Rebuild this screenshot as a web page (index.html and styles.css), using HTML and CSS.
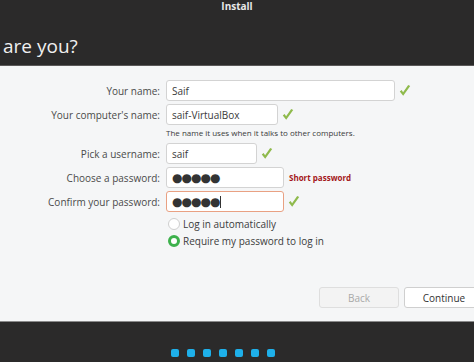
FILE: index.html
```html
<!DOCTYPE html>
<html lang="en">
<head>
    <meta charset="UTF-8">
    <title>Install</title>
    <link rel="stylesheet" href="styles.css">
</head>
<body>
    <div class="window">
        <!-- Pasek tytułu -->
        <header class="titlebar">
            <div class="app-title">Install</div>
            <h1 class="page-title">are you?</h1>
        </header>

        <!-- Formularz użytkownika -->
        <main class="panel">
            <div class="form">
                <div class="row">
                    <label class="label">Your name:</label>
                    <div class="field wide">Saif</div>
                    <svg class="check" viewBox="0 0 12 13"><path d="M0.8 7.4 L4.2 11.8 L11.2 2 L9.2 0.9 L4.1 8.2 L2.6 6.1 Z" fill="#8fba4c"/></svg>
                </div>
                <div class="row">
                    <label class="label">Your computer's name:</label>
                    <div class="field medium">saif-VirtualBox</div>
                    <svg class="check" viewBox="0 0 12 13"><path d="M0.8 7.4 L4.2 11.8 L11.2 2 L9.2 0.9 L4.1 8.2 L2.6 6.1 Z" fill="#8fba4c"/></svg>
                </div>
                <div class="hint">The name it uses when it talks to other computers.</div>
                <div class="row">
                    <label class="label">Pick a username:</label>
                    <div class="field small">saif</div>
                    <svg class="check" viewBox="0 0 12 13"><path d="M0.8 7.4 L4.2 11.8 L11.2 2 L9.2 0.9 L4.1 8.2 L2.6 6.1 Z" fill="#8fba4c"/></svg>
                </div>
                <div class="row">
                    <label class="label">Choose a password:</label>
                    <div class="field pass"><span class="dots">●●●●●</span></div>
                    <span class="warning">Short password</span>
                </div>
                <div class="row">
                    <label class="label">Confirm your password:</label>
                    <div class="field pass focused"><span class="dots">●●●●●</span><span class="caret"></span></div>
                    <svg class="check" viewBox="0 0 12 13"><path d="M0.8 7.4 L4.2 11.8 L11.2 2 L9.2 0.9 L4.1 8.2 L2.6 6.1 Z" fill="#8fba4c"/></svg>
                </div>
                <div class="options">
                    <div class="option"><span class="radio"></span>Log in automatically</div>
                    <div class="option"><span class="radio checked"></span>Require my password to log in</div>
                </div>
            </div>

            <div class="actions">
                <button class="btn disabled">Back</button>
                <button class="btn">Continue</button>
            </div>
        </main>

        <!-- Pasek postępu -->
        <footer class="progress">
            <span class="step"></span>
            <span class="step"></span>
            <span class="step"></span>
            <span class="step"></span>
            <span class="step"></span>
            <span class="step"></span>
            <span class="step"></span>
        </footer>
    </div>
</body>
</html>
```

FILE: styles.css
```css
/* Ustawienia ogólne */
html, body {
    margin: 0;
    padding: 0;
}

body {
    width: 474px;
    height: 362px;
    overflow: hidden;
    font-family: "Open Sans", "DejaVu Sans", sans-serif;
    background-color: #2b2a2a;
}

.window {
    display: flex;
    flex-direction: column;
    height: 362px;
}

/* Pasek tytułu */
.titlebar {
    height: 65px;
    background-color: #2b2a2a;
    border-bottom: 1px solid #5a5858;
    color: #f2f2f2;
}

.app-title {
    text-align: center;
    font-size: 10px;
    font-weight: bold;
    line-height: 13px;
    color: #e8e8e8;
}

.page-title {
    margin: 0;
    padding: 22px 0 0 3px;
    font-size: 19px;
    font-weight: normal;
    line-height: 22px;
    color: #f0f0f0;
}

/* Panel z formularzem */
.panel {
    height: 256px;
    background-color: #f5f6f7;
    border-bottom: 1px solid #8a8a8a;
    display: flex;
    flex-direction: column;
    box-sizing: border-box;
    padding-top: 14px;
}

.form {
    display: flex;
    flex-direction: column;
    font-size: 10px;
    color: #3c3c3c;
}

.row {
    display: flex;
    align-items: center;
    height: 21px;
    margin-bottom: 3px;
}

.label {
    width: 160px;
    padding-right: 6px;
    text-align: right;
    color: #4a4a4a;
}

.field {
    height: 21px;
    box-sizing: border-box;
    border: 1px solid #d3d3d3;
    border-radius: 3px;
    background-color: #fff;
    padding-left: 5px;
    display: flex;
    align-items: center;
    color: #3a3a3a;
}

.wide { width: 229px; }
.medium { width: 112px; }
.small { width: 91px; }
.pass { width: 118px; }

.focused {
    border-color: #e9a183;
}

.dots {
    font-size: 12px;
    letter-spacing: -1px;
    color: #333;
}

.caret {
    width: 1px;
    height: 12px;
    margin-left: 1px;
    background-color: #333;
}

.check {
    width: 12px;
    height: 13px;
    margin-left: 4px;
}

.warning {
    margin-left: 5px;
    font-size: 8px;
    font-weight: bold;
    color: #a4161a;
}

.hint {
    margin: -1px 0 5px 166px;
    font-size: 8px;
    line-height: 11px;
    color: #3a3a3a;
}

/* Opcje logowania */
.options {
    margin-left: 168px;
    margin-top: 0;
}

.option {
    display: flex;
    align-items: center;
    height: 17px;
    font-size: 10px;
    color: #3c3c3c;
}

.radio {
    width: 12px;
    height: 12px;
    box-sizing: border-box;
    border: 1px solid #cfcfcf;
    border-radius: 50%;
    background-color: #fff;
    margin-right: 3px;
}

.radio.checked {
    border: 3px solid #3db14c;
    background-color: #fff;
}

/* Przyciski */
.actions {
    margin-top: auto;
    margin-bottom: 13px;
    display: flex;
    justify-content: flex-end;
    gap: 5px;
    margin-right: -10px;
}

.btn {
    height: 21px;
    width: 80px;
    font-family: inherit;
    font-size: 10px;
    border: 1px solid #cfcfcf;
    border-radius: 3px;
    background-color: #fff;
    color: #333;
    padding: 0;
}

.btn.disabled {
    width: 80px;
    background-color: #f3f3f3;
    border-color: #dedede;
    color: #a8a8a8;
}

/* Pasek postępu */
.progress {
    flex: 1;
    display: flex;
    gap: 8px;
    padding: 27px 0 0 171px;
}

.step {
    width: 8px;
    height: 8px;
    border-radius: 2px;
    background-color: #1eb0ea;
}
```
